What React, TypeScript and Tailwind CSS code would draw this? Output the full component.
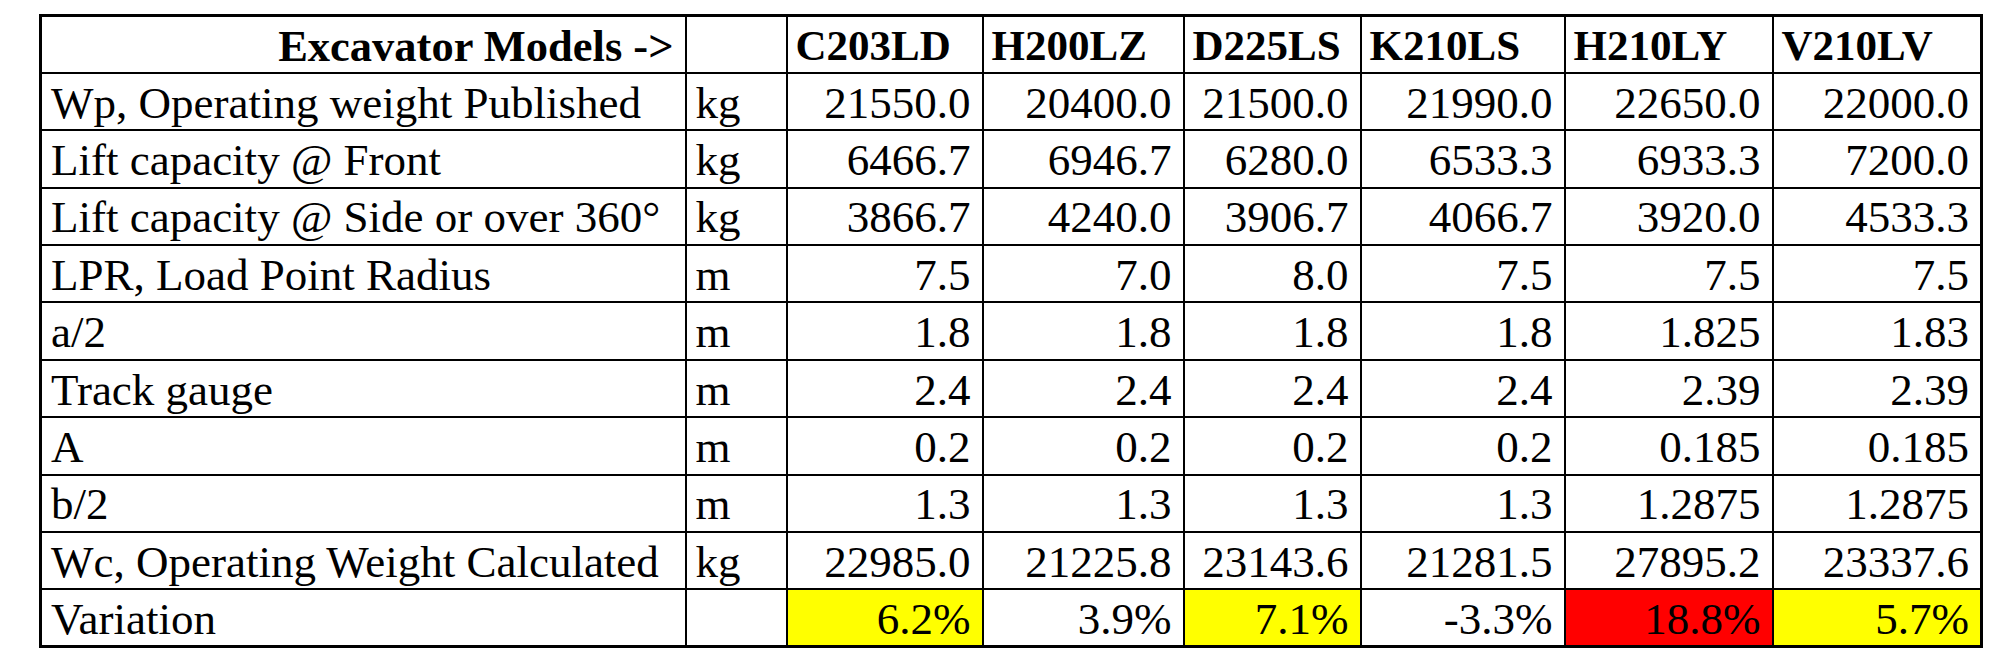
import React from "react";

const models = ["C203LD", "H200LZ", "D225LS", "K210LS", "H210LY", "V210LV"];

const rows: { label: string; unit: string; values: string[] }[] = [
  { label: "Wp, Operating weight Published", unit: "kg", values: ["21550.0", "20400.0", "21500.0", "21990.0", "22650.0", "22000.0"] },
  { label: "Lift capacity @ Front", unit: "kg", values: ["6466.7", "6946.7", "6280.0", "6533.3", "6933.3", "7200.0"] },
  { label: "Lift capacity @ Side or over 360°", unit: "kg", values: ["3866.7", "4240.0", "3906.7", "4066.7", "3920.0", "4533.3"] },
  { label: "LPR, Load Point Radius", unit: "m", values: ["7.5", "7.0", "8.0", "7.5", "7.5", "7.5"] },
  { label: "a/2", unit: "m", values: ["1.8", "1.8", "1.8", "1.8", "1.825", "1.83"] },
  { label: "Track gauge", unit: "m", values: ["2.4", "2.4", "2.4", "2.4", "2.39", "2.39"] },
  { label: "A", unit: "m", values: ["0.2", "0.2", "0.2", "0.2", "0.185", "0.185"] },
  { label: "b/2", unit: "m", values: ["1.3", "1.3", "1.3", "1.3", "1.2875", "1.2875"] },
  { label: "Wc, Operating Weight Calculated", unit: "kg", values: ["22985.0", "21225.8", "23143.6", "21281.5", "27895.2", "23337.6"] },
];

// variation row, with the cell fill from the sheet's conditional format
const variation = [
  { v: "6.2%", bg: "bg-[#ffff00]" },
  { v: "3.9%", bg: "" },
  { v: "7.1%", bg: "bg-[#ffff00]" },
  { v: "-3.3%", bg: "" },
  { v: "18.8%", bg: "bg-[#ff0000]" },
  { v: "5.7%", bg: "bg-[#ffff00]" },
];

const cell = "border-2 border-black h-[57.4px] p-0 leading-none align-middle";

export default function App() {
  return (
    <div className="min-h-[661px] bg-white pt-[14px] pl-[39px] font-['Liberation_Serif',serif] text-black">
      <table className="border-collapse border-[3px] border-black table-fixed">
        <colgroup>
          <col className="w-[645px]" />
          <col className="w-[101px]" />
          <col className="w-[196px]" />
          <col className="w-[201px]" />
          <col className="w-[177px]" />
          <col className="w-[204px]" />
          <col className="w-[208px]" />
          <col className="w-[209px]" />
        </colgroup>
        <tbody>
          {/* header */}
          <tr>
            <td className={`${cell} text-right pr-[11px] pt-[3px] text-[44.5px] font-bold whitespace-nowrap`}>
              Excavator Models -&gt;
            </td>
            <td className={cell}></td>
            {models.map((m) => (
              <td key={m} className={`${cell} text-left pl-[8px] pt-[3px] text-[43px] font-bold whitespace-nowrap`}>
                {m}
              </td>
            ))}
          </tr>

          {rows.map((r) => (
            <tr key={r.label}>
              <td className={`${cell} pl-[9px] pt-[3px] text-[45px] whitespace-nowrap`}>{r.label}</td>
              <td className={`${cell} pl-[9px] pt-[3px] text-[45px]`}>{r.unit}</td>
              {r.values.map((v, i) => (
                <td key={i} className={`${cell} text-right pr-[11px] pt-[3px] text-[45px] whitespace-nowrap`}>
                  {v}
                </td>
              ))}
            </tr>
          ))}

          <tr>
            <td className={`${cell} pl-[9px] pt-[3px] text-[45px]`}>Variation</td>
            <td className={cell}></td>
            {variation.map((c, i) => (
              <td key={i} className={`${cell} ${c.bg} text-right pr-[11px] pt-[3px] text-[45px] whitespace-nowrap`}>
                {c.v}
              </td>
            ))}
          </tr>
        </tbody>
      </table>
    </div>
  );
}
